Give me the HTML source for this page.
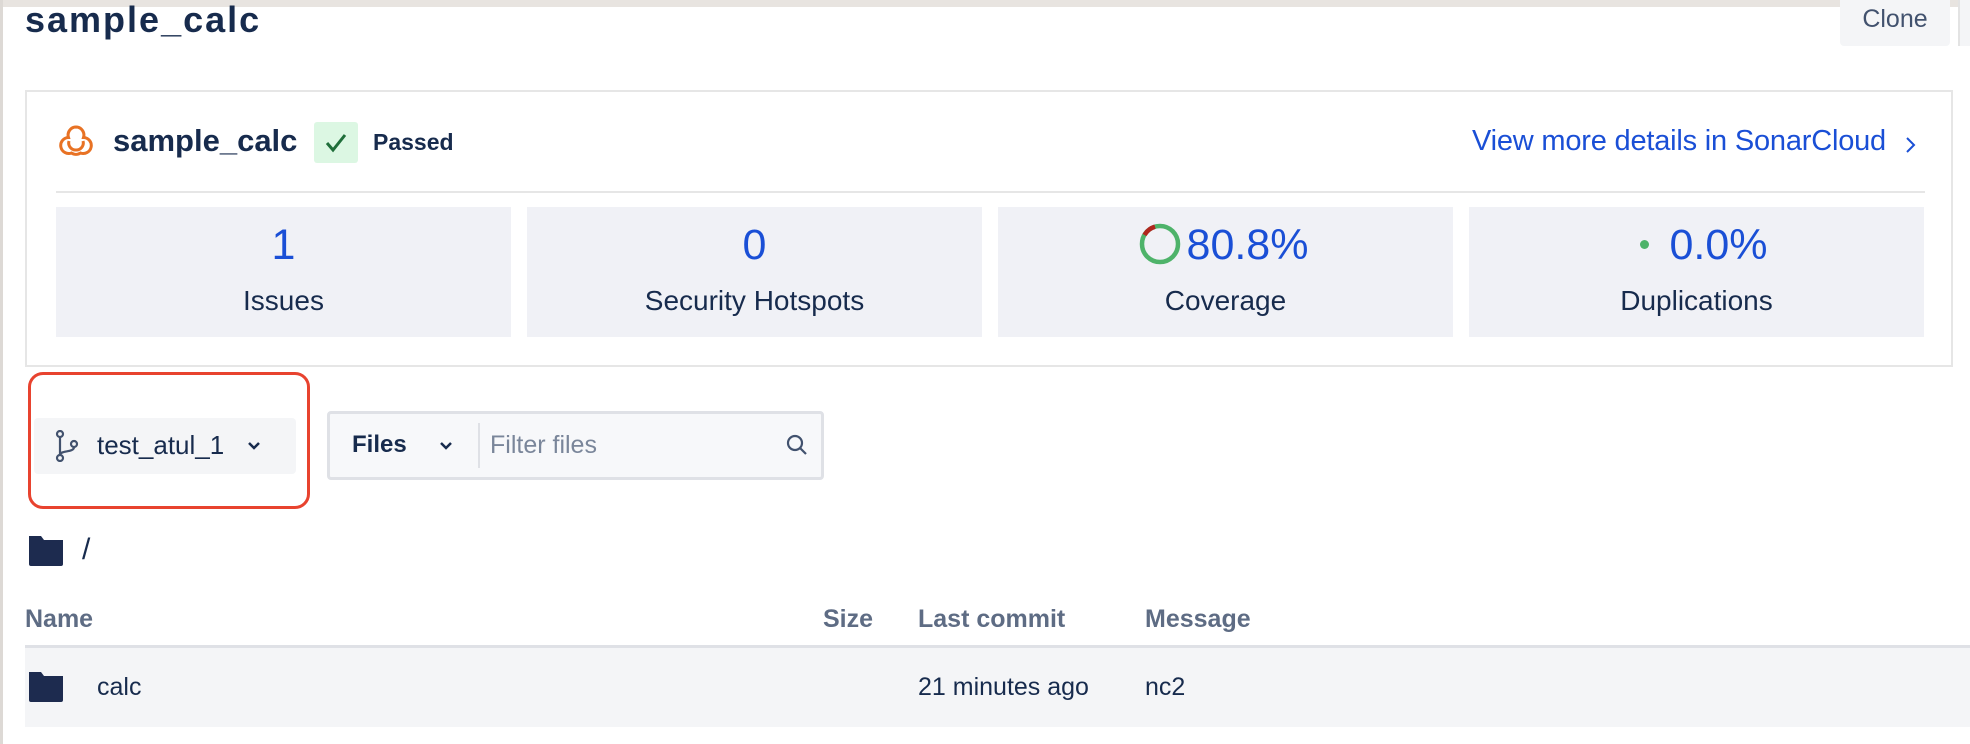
<!DOCTYPE html>
<html><head><meta charset="utf-8"><style>
*{box-sizing:border-box;margin:0;padding:0}
body{width:1970px;height:744px;background:#fff;font-family:"Liberation Sans",sans-serif;color:#172b4d;position:relative;overflow:hidden}
.a{position:absolute;white-space:nowrap}
.box{position:absolute;top:207px;height:130px;width:455px;background:#f0f1f6;text-align:center}
.num{position:absolute;left:0;right:0;top:14px;font-size:43px;color:#1a4fd6;line-height:48px}
.lab{position:absolute;left:0;right:0;top:78px;font-size:28px;line-height:32px}
.th{position:absolute;top:605px;font-size:25px;font-weight:bold;color:#5e6c84}
.td{position:absolute;top:673px;font-size:25px}
</style></head><body>
<div class="a" style="left:0;top:0;width:1970px;height:7px;background:#e8e4e0"></div>
<div class="a" style="left:0;top:0;width:3px;height:744px;background:#ddd9d5"></div>
<div class="a" style="left:25px;top:-2px;font-size:36px;font-weight:bold;letter-spacing:2px;line-height:44px">sample_calc</div>
<div class="a" style="left:1840px;top:0;width:110px;height:46px;background:#f4f5f7;border-radius:0 0 4px 4px;font-size:25px;text-align:center;line-height:38px;color:#42526e">Clone</div>
<div class="a" style="left:1958px;top:0;width:12px;height:46px;background:#f4f5f7;border-left:2px solid #e3e3e3"></div>

<div class="a" style="left:25px;top:90px;width:1928px;height:277px;border:2px solid #e6e6e6"></div>
<svg class="a" style="left:55px;top:124px" width="42" height="36" viewBox="0 0 42 36"><path d="M21 3a8 8 0 0 1 7.5 10.5a8 8 0 1 1-3 15.5a8 8 0 0 1-9 0a8 8 0 1 1-3-15.5A8 8 0 0 1 21 3z M14 17a7 7 0 0 0 7 9a7 7 0 0 0 7-9" fill="none" stroke="#e87224" stroke-width="3"/></svg>
<div class="a" style="left:113px;top:122px;font-size:31px;font-weight:bold;line-height:38px">sample_calc</div>
<div class="a" style="left:314px;top:122px;width:44px;height:41px;background:#dcf7e3;border-radius:3px"></div>
<svg class="a" style="left:324px;top:132px" width="24" height="22" viewBox="0 0 24 22"><path d="M3 11l6 7L21 3" fill="none" stroke="#1f6e3a" stroke-width="3"/></svg>
<div class="a" style="left:373px;top:128px;font-size:23px;font-weight:bold;line-height:28px">Passed</div>
<div class="a" style="left:1472px;top:124px;font-size:29px;color:#1a4fd6;line-height:34px;letter-spacing:-0.2px">View more details in SonarCloud</div>
<svg class="a" style="left:1903px;top:135px" width="14" height="20" viewBox="0 0 14 20"><path d="M4 3l7 7-7 7" fill="none" stroke="#1a4fd6" stroke-width="2"/></svg>
<div class="a" style="left:56px;top:191px;width:1869px;height:2px;background:#e6e6e6"></div>

<div class="box" style="left:56px"><div class="num">1</div><div class="lab">Issues</div></div>
<div class="box" style="left:527px"><div class="num">0</div><div class="lab">Security Hotspots</div></div>
<div class="box" style="left:998px"><div class="num" style="padding-left:44px">80.8%</div><div class="lab">Coverage</div></div>
<svg class="a" style="left:1138px;top:222px" width="44" height="44" viewBox="0 0 44 44"><circle cx="22" cy="22" r="18" fill="none" stroke="#4eb36a" stroke-width="4.5"/><path d="M6.5 13A18 18 0 0 1 17 4.7" fill="none" stroke="#b0261d" stroke-width="4.5"/></svg>
<div class="box" style="left:1469px"><div class="num" style="padding-left:44px">0.0%</div><div class="lab">Duplications</div></div>
<div class="a" style="left:1640px;top:240px;width:9px;height:9px;border-radius:50%;background:#4eb36a"></div>

<div class="a" style="left:28px;top:372px;width:282px;height:137px;border:3px solid #e8432f;border-radius:15px"></div>
<div class="a" style="left:34px;top:418px;width:262px;height:56px;background:#f4f5f7;border-radius:4px"></div>
<svg class="a" style="left:54px;top:430px" width="26" height="32" viewBox="0 0 26 32"><g fill="none" stroke="#42526e" stroke-width="2.2"><circle cx="6" cy="4" r="3"/><circle cx="6" cy="28" r="3"/><circle cx="20" cy="14" r="3"/><path d="M6 7v18M20 17c0 6-14 3-14 8"/></g></svg>
<div class="a" style="left:97px;top:430px;font-size:26px;line-height:30px">test_atul_1</div>
<svg class="a" style="left:246px;top:439px" width="16" height="14" viewBox="0 0 16 14"><path d="M3 4l5 5 5-5" fill="none" stroke="#172b4d" stroke-width="2.5"/></svg>

<div class="a" style="left:327px;top:411px;width:497px;height:69px;border:3px solid #dfe1e6;border-radius:4px;background:#f7f8fa"></div>
<div class="a" style="left:352px;top:431px;font-size:24px;font-weight:bold;line-height:28px">Files</div>
<svg class="a" style="left:438px;top:439px" width="16" height="14" viewBox="0 0 16 14"><path d="M3 4l5 5 5-5" fill="none" stroke="#172b4d" stroke-width="2.5"/></svg>
<div class="a" style="left:478px;top:423px;width:2px;height:45px;background:#dfe1e6"></div>
<div class="a" style="left:490px;top:430px;font-size:25px;color:#7a869a;line-height:30px">Filter files</div>
<svg class="a" style="left:785px;top:433px" width="24" height="24" viewBox="0 0 24 24"><circle cx="10" cy="10" r="7" fill="none" stroke="#42526e" stroke-width="2.2"/><path d="M15 15l6 6" stroke="#42526e" stroke-width="2.2"/></svg>

<svg class="a" style="left:28px;top:534px" width="36" height="32" viewBox="0 0 36 32"><path d="M1 2h12l3 4h19v24a2 2 0 0 1-2 2H3a2 2 0 0 1-2-2z" fill="#1d2b4f"/></svg>
<div class="a" style="left:82px;top:532px;font-size:30px;line-height:36px">/</div>

<div class="th" style="left:25px">Name</div>
<div class="th" style="left:823px">Size</div>
<div class="th" style="left:918px">Last commit</div>
<div class="th" style="left:1145px">Message</div>
<div class="a" style="left:25px;top:645px;width:1945px;height:3px;background:#dfe1e6"></div>
<div class="a" style="left:25px;top:648px;width:1945px;height:79px;background:#f4f5f7"></div>
<svg class="a" style="left:28px;top:670px" width="36" height="32" viewBox="0 0 36 32"><path d="M1 2h12l3 4h19v24a2 2 0 0 1-2 2H3a2 2 0 0 1-2-2z" fill="#1d2b4f"/></svg>
<div class="td" style="left:97px">calc</div>
<div class="td" style="left:918px">21 minutes ago</div>
<div class="td" style="left:1145px">nc2</div>
</body></html>
